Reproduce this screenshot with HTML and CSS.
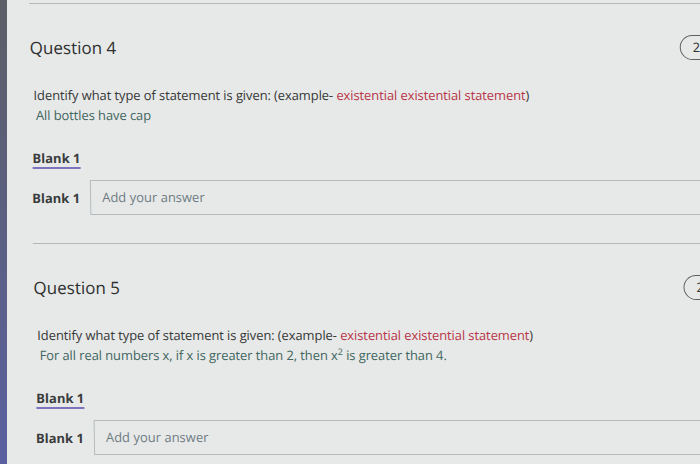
FILE: index.html
```html
<!DOCTYPE html>
<html lang="en">
<head>
<meta charset="utf-8">
<title>Quiz</title>
<link rel="stylesheet" href="styles.css">
</head>
<body>
<div class="page">
  <div class="edge"></div>
  <main class="main">
    <section class="question">
      <div class="q-head">
        <h2 class="q-title">Question 4</h2>
        <span class="badge">2 Points</span>
      </div>
      <div class="prompt">
        <div>Identify what type of statement is given: (example- <span class="red">existential existential statement</span>)</div>
        <div class="sub">All bottles have cap</div>
      </div>
      <div class="blank-tab"><span class="tab">Blank 1</span></div>
      <div class="answer-row">
        <span class="answer-label">Blank 1</span>
        <div class="answer-input">Add your answer</div>
      </div>
    </section>
    <section class="question">
      <div class="q-head">
        <h2 class="q-title">Question 5</h2>
        <span class="badge">2 Points</span>
      </div>
      <div class="prompt">
        <div>Identify what type of statement is given: (example- <span class="red">existential existential statement</span>)</div>
        <div class="sub">For all real numbers x, if x is greater than 2, then x<sup>2</sup> is greater than 4.</div>
      </div>
      <div class="blank-tab"><span class="tab">Blank 1</span></div>
      <div class="answer-row">
        <span class="answer-label">Blank 1</span>
        <div class="answer-input">Add your answer</div>
      </div>
    </section>
  </main>
</div>
</body>
</html>
```
FILE: styles.css
```css
html, body {
  margin: 0;
  padding: 0;
  height: 464px;
  overflow: hidden;
  background: #e7e9e8;
}
body {
  font-family: "Open Sans", "Noto Sans", sans-serif;
  color: #363838;
}
.page {
  display: flex;
  height: 464px;
  width: 780px;
}
.edge {
  width: 7px;
  flex: none;
  background: linear-gradient(#5c5f66, #5a60a0);
}
.main {
  width: 731px;
  padding-left: 22px;
  padding-top: 3px;
  transform: skewX(0.9deg);
  transform-origin: 0 0;
}
.question {
  border-top: 1px solid #b3b8bb;
  padding-top: 31px;
  padding-bottom: 28px;
}
.q-head {
  display: flex;
  align-items: center;
  justify-content: space-between;
  height: 25px;
}
.q-title {
  margin: 0;
  font-size: 17px;
  font-weight: 400;
  line-height: 25px;
  color: #2e3030;
}
.badge {
  box-sizing: border-box;
  width: 81px;
  height: 25px;
  border: 1.5px solid #5e6062;
  border-radius: 13px;
  padding-left: 12px;
  font-size: 13px;
  line-height: 22px;
  color: #333;
  white-space: nowrap;
}
.prompt {
  margin-top: 25px;
  font-size: 13px;
  letter-spacing: -0.1px;
  line-height: 20px;
  padding-left: 3px;
}
.red {
  color: #b83548;
}
.sub {
  padding-left: 2px;
  color: #3f6661;
}
.sub sup {
  font-size: 9px;
  line-height: 0;
}
.blank-tab {
  margin-top: 21px;
  padding-left: 1px;
  height: 20px;
}
.tab {
  display: inline-block;
  font-size: 13px;
  font-weight: 700;
  line-height: 18px;
  color: #3a3c3e;
  border-bottom: 2px solid #7d72c0;
}
.answer-row {
  margin-top: 14px;
  display: flex;
  align-items: center;
  gap: 10px;
  padding-left: 0;
}
.answer-label {
  font-size: 13px;
  font-weight: 700;
  color: #3a3c3e;
}
.answer-input {
  flex: 1;
  box-sizing: border-box;
  height: 35px;
  border: 1px solid #b5bbbe;
  padding-left: 11px;
  font-size: 13px;
  line-height: 33px;
  color: #6f7c84;
}
```
